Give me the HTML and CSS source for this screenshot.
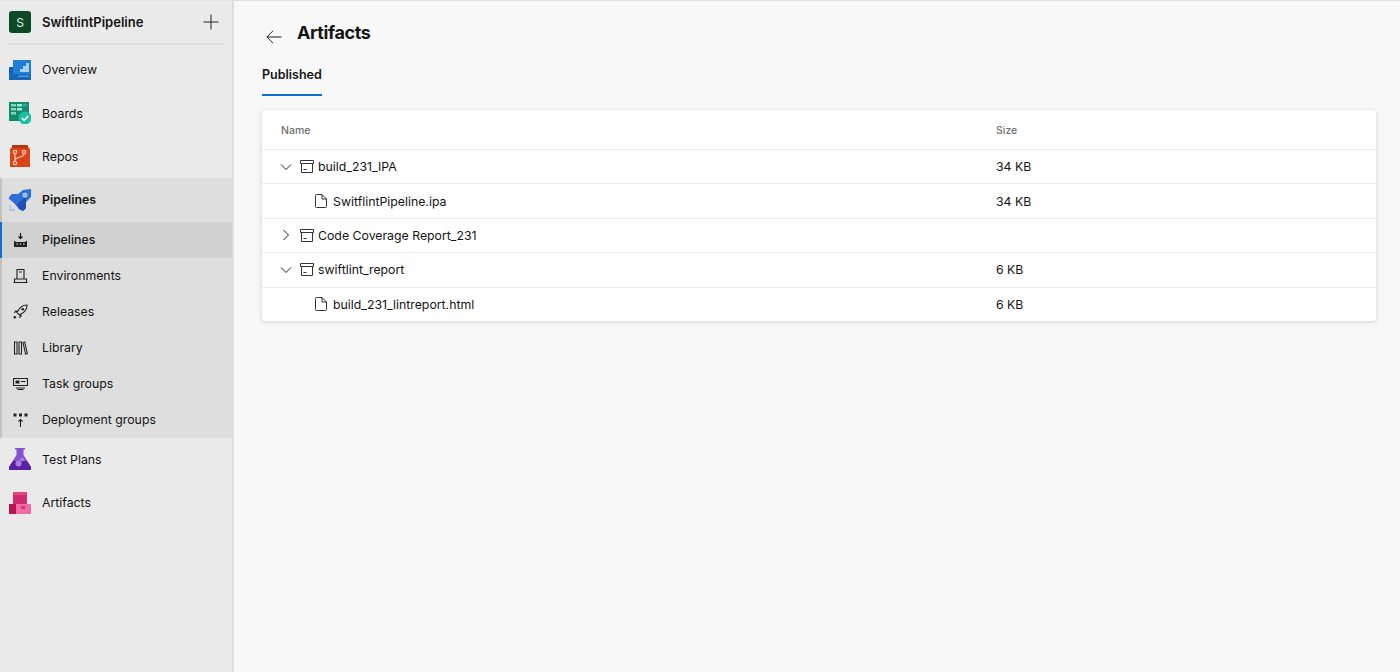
FILE: index.html
```html
<!DOCTYPE html>
<html lang="en">
<head>
  <meta charset="UTF-8" />
  <meta name="viewport" content="width=device-width, initial-scale=1.0" />
  <title>Artifacts</title>
  <link rel="stylesheet" href="styles.css">
</head>
<body>
  <div class="app">
    <nav class="sidebar">
      <div class="project">
        <div class="avatar">S</div>
        <div class="project-name">SwiftlintPipeline</div>
        <svg class="plus" width="16" height="16" viewBox="0 0 16 16"><path d="M8 0.5v15M0.5 8h15" stroke="#222" stroke-width="1" fill="none"/></svg>
      </div>
      <div class="project-line"></div>

      <a class="nav-item">
        <svg class="hub-icon" width="22" height="22" viewBox="0 0 22 22">
          <path d="M0 8h5V21H0z" fill="#1a5fae"/>
          <path d="M4 1h18v18H4z" fill="#1f7fd8"/>
          <path d="M0 15h22v6H0z" fill="#1765b8"/>
          <path d="M8 13h3v-3h3V7h3V4h3v9z" fill="#a9d3f5"/>
          <path d="M9 16.500h11v1.500H9z" fill="#4c9be3"/>
        </svg>
        <span>Overview</span>
      </a>
      <a class="nav-item">
        <svg class="hub-icon" width="22" height="22" viewBox="0 0 22 22">
          <path d="M0 0h20v19H0z" fill="#15896f"/>
          <path d="M2 2h5v2.500H2zM2 6h5v2.500H2zM2 10h5v2.500H2z" fill="#7fd8c0"/>
          <path d="M8 2h5v2.500H8zM8 6h5v2.500H8z" fill="#a8e6d6"/>
          <path d="M14 2h4v2.500h-4z" fill="#3aa88e"/>
          <circle cx="16" cy="16" r="6.500" fill="#19bf9f"/>
          <path d="M12.800 16l2.300 2.300 4.100-4.300" stroke="#fff" stroke-width="1.600" fill="none"/>
        </svg>
        <span>Boards</span>
      </a>
      <a class="nav-item">
        <svg class="hub-icon" width="22" height="22" viewBox="0 0 22 22">
          <path d="M3 2l2-2h12l2 2 2 2v18H1V4z" fill="#d9441b"/>
          <path d="M3 0h16v3H3z" fill="#b5350f"/>
          <g stroke="#f8c9b6" stroke-width="1.200" fill="none">
            <circle cx="6" cy="7" r="1.700"/>
            <circle cx="15" cy="7" r="1.700"/>
            <circle cx="6" cy="18" r="1.700"/>
            <path d="M6 9v7M15 9c0 4-9 2-9 7"/>
          </g>
        </svg>
        <span>Repos</span>
      </a>

      <div class="group">
        <a class="nav-item group-head">
          <svg class="hub-icon" width="22" height="22" viewBox="0 0 22 22">
            <path d="M0 8L3 5H9L14 1L22 0V8L17 13V19L14 22L10 20L5 14L0 10z" fill="#2c6ed6"/>
            <path d="M8 15L17 8V19L14 22L10 20z" fill="#1d4fb4"/>
            <circle cx="16" cy="6" r="2.600" fill="#9cc0f5"/>
            <path d="M1 16v5h5" stroke="#9cc0f5" stroke-width="1.300" fill="none"/>
          </svg>
          <span>Pipelines</span>
        </a>
        <a class="sub-item active">
          <svg class="sub-icon" width="14" height="14" viewBox="0 0 14 14">
            <path d="M7 0v5M5 3.500L7 5.500l2-2" stroke="#111" stroke-width="1.100" fill="none"/>
            <path d="M0.500 14V7.500l2 1.500h9l2-1.500V14z" fill="#222"/>
            <path d="M3 10.500h1.300v1.300H3zM6.300 10.500h1.300v1.300H6.300zM9.700 10.500H11v1.300H9.700z" fill="#ddd"/>
          </svg>
          <span>Pipelines</span>
        </a>
        <a class="sub-item">
          <svg class="sub-icon" width="14" height="14" viewBox="0 0 14 14">
            <path d="M3.500 9.500V0.500h7v9M5.500 3h3M1 13.500v-3.500h12v3.500zM0 13.500h14" stroke="#222" stroke-width="1.100" fill="none"/>
          </svg>
          <span>Environments</span>
        </a>
        <a class="sub-item">
          <svg class="sub-icon" width="15" height="15" viewBox="0 0 15 15">
            <path d="M14 1c-4 0-7 2-9 6l-1.500 1 3.500 3.500 1-1.500c4-2 6-5 6-9zM5 7H2.500L1.500 9M8 10v2.500l-2 1" stroke="#222" stroke-width="1.100" fill="none"/>
            <circle cx="9.800" cy="5.200" r="1.300" fill="#222"/>
            <circle cx="1.800" cy="13.200" r="1.300" fill="#222"/>
          </svg>
          <span>Releases</span>
        </a>
        <a class="sub-item">
          <svg class="sub-icon" width="14" height="14" viewBox="0 0 14 14">
            <path d="M1 1h2.500v12H1zM5.500 1H8v12H5.500zM9.500 1.500l1.700-0.500 2.600 11.500-1.700 0.500z" stroke="#222" stroke-width="1.100" fill="none"/>
          </svg>
          <span>Library</span>
        </a>
        <a class="sub-item">
          <svg class="sub-icon" width="15" height="12" viewBox="0 0 15 12">
            <path d="M0.500 0.500h14v7h-14zM3 10h9M4.500 11.500h6" stroke="#222" stroke-width="1.100" fill="none"/>
            <path d="M2.500 2.500h4v3h-4zM8 3h4.500v1H8z" fill="#222"/>
          </svg>
          <span>Task groups</span>
        </a>
        <a class="sub-item">
          <svg class="sub-icon" width="14" height="14" viewBox="0 0 14 14">
            <path d="M0 0.500h3v3H0zM5.500 0.500h3v3h-3zM11 0.500h3v3h-3z" fill="#222"/>
            <path d="M7 14V6.500M5 8.500l2-2 2 2" stroke="#222" stroke-width="1.100" fill="none"/>
          </svg>
          <span>Deployment groups</span>
        </a>
      </div>

      <a class="nav-item">
        <svg class="hub-icon" width="22" height="22" viewBox="0 0 22 22">
          <path d="M6 0h10v1.500h-1.500V7l7.500 12v3H0v-3L7.500 7V1.500H6z" fill="#8552d1"/>
          <path d="M0 19l4-6h14l4 6v3H0z" fill="#5b1fa3"/>
          <circle cx="9.500" cy="15.500" r="3" fill="#a680e0"/>
          <circle cx="13" cy="11.500" r="2" fill="#a680e0"/>
        </svg>
        <span>Test Plans</span>
      </a>
      <a class="nav-item">
        <svg class="hub-icon" width="22" height="22" viewBox="0 0 22 22">
          <path d="M4 0h14v12H4z" fill="#cf2a70"/>
          <path d="M4 0h14v3H4z" fill="#e0457f"/>
          <path d="M0 12h8v10H0z" fill="#b81557"/>
          <path d="M7 12h15v10H7z" fill="#f06ba3"/>
          <path d="M12 14h4v3h-4z" fill="#c8387a"/>
        </svg>
        <span>Artifacts</span>
      </a>
    </nav>

    <main class="content">
      <div class="page-title">
        <svg class="back" width="16" height="14" viewBox="0 0 16 14"><path d="M15.500 7H1M7 0.800L0.900 7l6.100 6.200" stroke="#222" stroke-width="1" fill="none"/></svg>
        <h1>Artifacts</h1>
      </div>
      <div class="tabs">
        <div class="tab">Published</div>
      </div>

      <div class="card">
        <div class="row head">
          <div class="col-name">Name</div>
          <div class="col-size">Size</div>
        </div>
        <div class="row">
          <div class="col-name">
            <svg class="chev" width="12" height="12" viewBox="0 0 12 12"><path d="M1 3.500l5 5 5-5" stroke="#222" stroke-width="1" fill="none"/></svg>
            <svg class="box" width="14" height="13" viewBox="0 0 14 13"><path d="M0.500 0.500h13v3h-13zM1.500 3.500v9h11v-9M3.500 9.500h3" stroke="#333" stroke-width="1" fill="none"/></svg>
            <span>build_231_IPA</span>
          </div>
          <div class="col-size">34 KB</div>
        </div>
        <div class="row child">
          <div class="col-name">
            <svg class="file" width="12" height="14" viewBox="0 0 12 14"><path d="M1.500 0.500h5.500l4.500 4.500v7.500a1 1 0 0 1-1 1h-9a1 1 0 0 1-1-1v-11a1 1 0 0 1 1-1zM7 0.500V5h4.500" stroke="#333" stroke-width="1" fill="none"/></svg>
            <span>SwitflintPipeline.ipa</span>
          </div>
          <div class="col-size">34 KB</div>
        </div>
        <div class="row">
          <div class="col-name">
            <svg class="chev" width="12" height="12" viewBox="0 0 12 12"><path d="M3.500 1l5 5-5 5" stroke="#222" stroke-width="1" fill="none"/></svg>
            <svg class="box" width="14" height="13" viewBox="0 0 14 13"><path d="M0.500 0.500h13v3h-13zM1.500 3.500v9h11v-9M3.500 9.500h3" stroke="#333" stroke-width="1" fill="none"/></svg>
            <span>Code Coverage Report_231</span>
          </div>
          <div class="col-size"></div>
        </div>
        <div class="row">
          <div class="col-name">
            <svg class="chev" width="12" height="12" viewBox="0 0 12 12"><path d="M1 3.500l5 5 5-5" stroke="#222" stroke-width="1" fill="none"/></svg>
            <svg class="box" width="14" height="13" viewBox="0 0 14 13"><path d="M0.500 0.500h13v3h-13zM1.500 3.500v9h11v-9M3.500 9.500h3" stroke="#333" stroke-width="1" fill="none"/></svg>
            <span>swiftlint_report</span>
          </div>
          <div class="col-size">6 KB</div>
        </div>
        <div class="row child">
          <div class="col-name">
            <svg class="file" width="12" height="14" viewBox="0 0 12 14"><path d="M1.500 0.500h5.500l4.500 4.500v7.500a1 1 0 0 1-1 1h-9a1 1 0 0 1-1-1v-11a1 1 0 0 1 1-1zM7 0.500V5h4.500" stroke="#333" stroke-width="1" fill="none"/></svg>
            <span>build_231_lintreport.html</span>
          </div>
          <div class="col-size">6 KB</div>
        </div>
      </div>
    </main>
  </div>
</body>
</html>
```

FILE: styles.css
```css
* { box-sizing: border-box; }
html, body { height: 100%; }
body {
  margin: 0;
  font-family: Inter, "Liberation Sans", sans-serif;
  font-size: 12.300px;
  color: #141414;
  background: #f8f8f8;
  overflow: hidden;
}
.app {
  display: flex;
  height: 672px;
  border-top: 1px solid #e2e2e2;
}
.sidebar {
  width: 234px;
  flex-shrink: 0;
  background: #eaeaea;
  border-right: 2px solid #dedede;
}
.project {
  display: flex;
  align-items: center;
  height: 42px;
  padding: 0 13px 0 9px;
}
.avatar {
  width: 22px;
  height: 22px;
  border-radius: 3px;
  background: #0b4a24;
  color: #e6efe9;
  font-size: 12px;
  display: flex;
  align-items: center;
  justify-content: center;
  margin-right: 11px;
}
.project-name {
  flex: 1;
  font-size: 13px;
  font-weight: 600;
}
.project-line {
  height: 2px;
  margin: 0 9px 3px 8px;
  background: #dedede;
}
.nav-item {
  display: flex;
  align-items: center;
  height: 43.400px;
  padding-left: 9px;
}
.hub-icon {
  margin-right: 11px;
  flex-shrink: 0;
}
.group {
  background: #dedede;
  border-left: 2px solid #c2c2c2;
}
.group-head {
  padding-left: 7px;
  font-weight: 600;
}
.sub-item {
  display: flex;
  align-items: center;
  height: 36px;
  padding-left: 11px;
}
.sub-icon {
  width: 15px;
  margin-right: 14px;
  flex-shrink: 0;
}
.sub-item.active {
  background: #d1d1d1;
  font-weight: 500;
  margin-left: -2px;
  border-left: 2px solid #0f6fd1;
}
.content {
  flex: 1;
  padding: 0 24px 0 28px;
}
.page-title {
  display: flex;
  align-items: center;
  height: 64px;
  padding-bottom: 1px;
}
.back {
  margin: 9px 15px 0 4px;
}
h1 {
  margin: 0;
  font-size: 18px;
  font-weight: 700;
  letter-spacing: -0.4px;
}
.tabs {
  display: flex;
}
.tab {
  height: 31px;
  padding-top: 2px;
  font-weight: 600;
  font-size: 12.500px;
  border-bottom: 2px solid #0f6fd1;
}
.card {
  margin-top: 14px;
  background: #fff;
  border-radius: 4px;
  box-shadow: 0 1px 5px rgba(0, 0, 0, 0.16);
}
.row {
  display: flex;
  align-items: center;
  height: 34.400px;
  padding-left: 18px;
  border-top: 1px solid #ebebeb;
}
.row.head {
  height: 39px;
  padding-left: 19px;
  padding-top: 1px;
  border-top: none;
  color: #6e6e6e;
  font-size: 10.500px;
  font-weight: 500;
}
.row.child {
  padding-left: 53px;
}
.col-name {
  width: 716px;
  display: flex;
  align-items: center;
}
.row.head .col-name {
  width: 715px;
}
.row.child .col-name {
  width: 681px;
}
.chev {
  margin-right: 8px;
}
.box {
  margin-right: 4px;
}
.file {
  margin-right: 6px;
}
```
